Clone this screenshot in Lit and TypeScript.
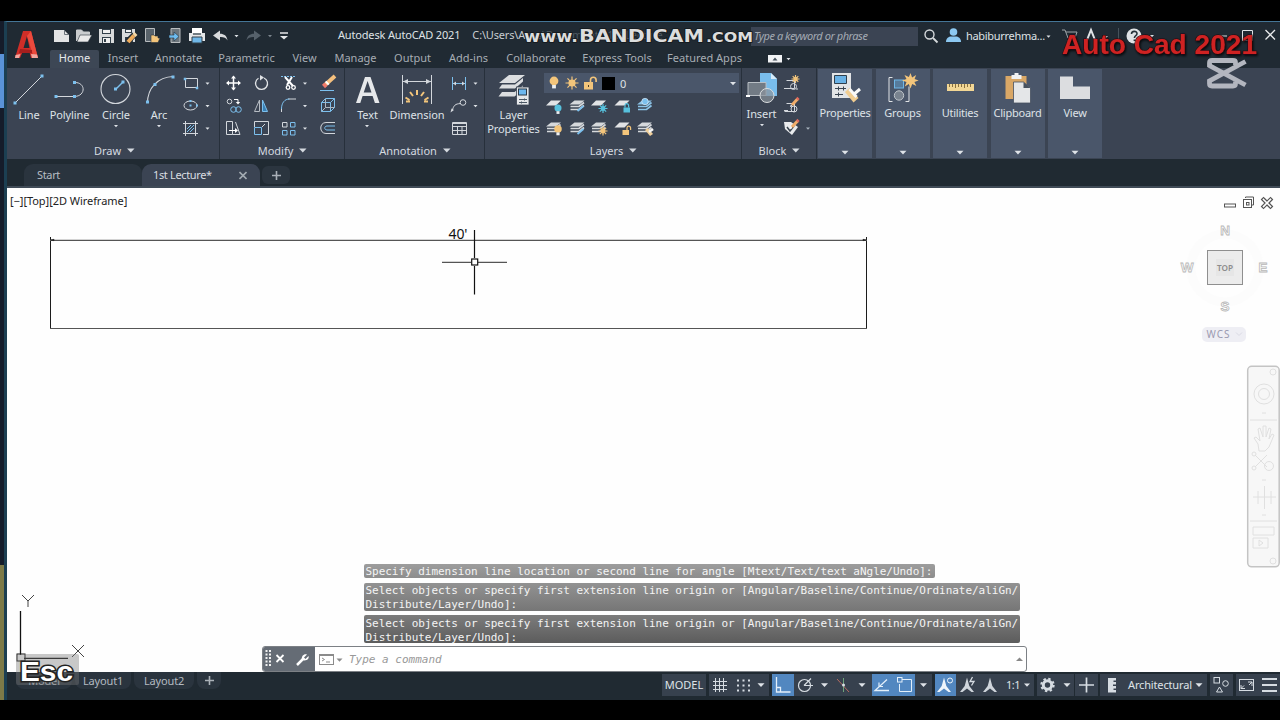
import { LitElement, html, svg, css, TemplateResult } from "lit";
import { customElement } from "lit/decorators.js";

type Body = unknown;

// Every glyph is drawn in window coordinates; the viewBox selects its cell.
const ic = (x: number, y: number, w: number, h: number, body: Body): TemplateResult =>
  html`<svg class="ic" width=${w} height=${h} viewBox="${x} ${y} ${w} ${h}" fill="none">${body}</svg>`;

const caret = (x: number, y: number, s = 2.5, c = "#dfe3e8") =>
  svg`<path d="M${x - s} ${y - s / 2}h${2 * s}l${-s} ${s * 1.1}z" fill=${c}/>`;

const B = "#7cc0ee";
const L = "#d3d7dc";
const Y = "#f3c57b";

const dots = (pts: number[][], s = 3) =>
  pts.map(([x, y]) => svg`<rect x=${x - s / 2} y=${y - s / 2} width=${s} height=${s} fill=${B}/>`);

const quick = [
  ic(50, 22, 22, 28, svg`<path d="M54 30h10l5 5v7H54z" fill="#e3e4e5"/><path d="M64.500 30v4.500H69" stroke="#6b737b"/>`),
  ic(72, 22, 23, 28, svg`<path d="M76.500 41V30h5l2 2h6v3" stroke="#c9ccce" fill="#c9ccce"/><path d="M80 35h12l-4 7H77z" fill="#e9e9e9" stroke="#2a343d" stroke-width=".6"/>`),
  ic(95, 22, 23, 28, svg`<path d="M99 29h15v14H99z" fill="#d9dbdc"/><path d="M102 29h9v5h-9zM102 37h9v6h-9z" fill="#33404a"/><path d="M103 30h7v3h-7zM103 38h7v5h-7z" fill="#f0f0f0"/><path d="M104 39h2v3h-2z" fill="#33404a"/>`),
  ic(118, 22, 22, 28, svg`<path d="M122 29h13v13h-13z" fill="#d9dbdc"/><path d="M125 29h7v4h-7zM125 37h8v5h-8z" fill="#33404a"/><path d="M126 30h5v2h-5z" fill="#f0f0f0"/><path d="M127.500 41.500l7-7" stroke="#202a33" stroke-width="6"/><path d="M128 42l6-6.500" stroke="#f0ad5c" stroke-width="4"/><path d="M134 35.500l2-2" stroke="#f5d9a6" stroke-width="4"/>`),
  ic(140, 22, 23, 28, svg`<path d="M145.500 28.500h9v13h-9z" fill="#59636b" stroke="#b8bcbf"/><path d="M151 42v-7h3l1 1h3v2h2l-2 4.500h-7z" fill=${Y} stroke="#29333c" stroke-width=".6"/>`),
  ic(163, 22, 23, 28, svg`<path d="M171 28.500h9v14h-9z" fill="#6d767d" stroke="#b8bcbf"/><path d="M169 35h5v-3l5 4.500-5 4.500v-3h-5z" fill="#6fbdf0" stroke="#24303a" stroke-width=".6"/>`),
  ic(186, 22, 22, 28, svg`<path d="M192 28h10v5h-10z" fill="#fff"/><path d="M189 33h16v8H189z" fill="#e4e6e8"/><path d="M192 37h10v6h-10z" fill="#6fb7e8" stroke="#33404a"/><path d="M193 34h8" stroke="#4d5962" stroke-width="1.500"/>`),
  ic(208, 22, 34, 28, svg`<path d="M213 35.500l7-5v3.200c4 0 7 2 7.500 6.800-1.500-3-4-3.500-7.500-3.400V40.500z" fill="#d8dadc"/>${caret(236.5, 36, 2)}`),
  ic(242, 22, 34, 28, svg`<path d="M261 35.500l-7-5v3.200c-4 0-7 2-7.500 6.800 1.500-3 4-3.500 7.500-3.400V40.500z" fill="#56616b"/>${caret(270, 36, 2, "#7c868e")}`),
  ic(276, 22, 22, 28, svg`<path d="M280 33h8" stroke="#e4e6e8" stroke-width="1.500"/><path d="M280 36h8l-4 3.500z" fill="#e4e6e8"/>`),
];

const tabs: [string, number][] = [
  ["Home", 49], ["Insert", 48], ["Annotate", 63], ["Parametric", 73], ["View", 43], ["Manage", 59],
  ["Output", 55], ["Add-ins", 57], ["Collaborate", 78], ["Express Tools", 84], ["Featured Apps", 91],
];

const sheets = (x: number, y: number, c = "#d6d9dc") => svg`
  <path d="M${x} ${y}h10l-5 4h-10z" fill=${c}/>
  <path d="M${x - 4} ${y + 6}h8.500l5-4M${x - 4} ${y + 9}h8.500l5-4" stroke=${c} stroke-width="1.700"/>`;

const bulb = (x: number, y: number, c = Y, k = 1) => svg`
  <circle cx=${x} cy=${y} r=${4.4 * k} fill=${c}/><path d="M${x - 1.9 * k} ${y + 4 * k}h${3.8 * k}v${3.4 * k}h${-3.8 * k}z" fill="#eceff1"/>`;

const sun = (x: number, y: number, r: number, c = Y) => svg`
  <circle cx=${x} cy=${y} r=${r * 0.55} fill=${c}/>
  <path d="M${x - r} ${y}h${2 * r}M${x} ${y - r}v${2 * r}M${x - r * 0.7} ${y - r * 0.7}l${r * 1.4} ${r * 1.4}M${x + r * 0.7} ${y - r * 0.7}l${-r * 1.4} ${r * 1.4}" stroke=${c} stroke-width="1.200"/>`;

const lock = (x: number, y: number, c: string, open = false) => svg`
  <rect x=${x - 3} y=${y} width="6.500" height="5" fill=${c}/><path d="M${x - 1.5 + (open ? 3 : 0)} ${y}v-2a1.800 1.800 0 013.600 0v2" stroke=${c} stroke-width="1.200"/>`;

const pencil = (x: number, y: number) => svg`
  <path d="M${x} ${y}l5.500-6" stroke="#f0ad6a" stroke-width="3"/><path d="M${x + 5} ${y - 5.5}l1.500-1.600" stroke="#e06a5e" stroke-width="3"/><path d="M${x - 2} ${y + 2}l2.500-.8-1.600-1.600z" fill="#fff"/>`;

const brush = (x: number, y: number) => svg`
  <path d="M${x - 4} ${y - 2}l3-2 5 6-3 2z" fill="#efcf9b"/><path d="M${x} ${y}l4-3" stroke="#f5f5f5" stroke-width="2.500"/>`;

const big = (icon: TemplateResult, label: string, w: number, arrow?: TemplateResult) => html`
  <div class="big" style="width:${w}px">${icon}<span class="lbl">${label}</span>${arrow ?? ""}</div>`;

const drawSmall = [
  ic(178, 72, 41, 23, svg`<path d="M185.500 78.500h12v9h-12z" stroke=${L}/>${dots([[185, 79], [197, 88]], 2.5)}${caret(207.5, 83.5, 2)}`),
  ic(178, 95, 41, 22, svg`<ellipse cx="190.500" cy="105.500" rx="6.500" ry="4.500" stroke=${L}/>${dots([[190.5, 105.5], [197, 105.5], [190.5, 101]], 2)}${caret(207.5, 106, 2)}`),
  ic(178, 117, 41, 23, svg`<path d="M183 123.500h15M183 133.500h15M185.500 121v15M195.500 121v15" stroke=${L}/><path d="M187 129l4-4M187 132l7-7M190 132l4-4" stroke=${B}/>${caret(207.5, 128.5, 2)}`),
];

const modifyIcons = [
  ic(220, 72, 27, 23, svg`<path d="M227 83h13M233.500 76.500v13" stroke="#fff" stroke-width="1.500"/><path d="M226 83l3-2.500v5zM241 83l-3-2.500v5zM233.500 75.500l-2.500 3h5zM233.500 90.500l-2.500-3h5z" fill="#fff"/>`),
  ic(247, 72, 27, 23, svg`<path d="M258.500 78.300a6 6 0 105.500-.3" stroke="#e0e3e6" stroke-width="1.300"/><path d="M260 75v5.500l4-3z" fill="#e0e3e6"/>`),
  ic(274, 72, 38, 23, svg`<path d="M281 76.500h15" stroke=${B} stroke-dasharray="2 1"/><path d="M285 77l8 9M292 77l-5 8" stroke="#fff" stroke-width="2"/><circle cx="288" cy="87.500" r="1.800" stroke="#fff" stroke-width="1.300"/><circle cx="293.500" cy="87.500" r="1.800" stroke="#fff" stroke-width="1.300"/>${caret(305, 83.5, 2)}`),
  ic(312, 72, 32, 23, svg`<path d="M320 90.500h14" stroke=${B}/><path d="M325 85l10-9" stroke="#f5c07e" stroke-width="4"/><path d="M323.500 86.500l2.500-2.300" stroke="#f0796b" stroke-width="4.500"/><path d="M326.500 83.700l1.500-1.400" stroke="#fff" stroke-width="4.500"/>`),
  ic(220, 95, 27, 22, svg`<circle cx="229.500" cy="101.500" r="2.300" stroke=${L}/><path d="M234 99.500h4v3.500" stroke="#fff"/><path d="M235.800 102h4.400l-2.200 2.500z" fill="#fff"/><circle cx="233.500" cy="109.500" r="2.800" stroke=${B}/><circle cx="238.500" cy="109.500" r="2.800" stroke=${B}/>`),
  ic(247, 95, 27, 22, svg`<path d="M259.500 100v11.500h-5z" stroke="#b6bcc3"/><path d="M262.500 100v11.500h5z" stroke=${B} fill="#3980b4"/>`),
  ic(274, 95, 38, 22, svg`<path d="M281.500 112v-4M288 99h8" stroke=${L}/><path d="M281.500 109c0-6 3-10 8-10" stroke=${B}/>${caret(305, 106, 2)}`),
  ic(312, 95, 32, 22, svg`<path d="M321.500 102.500h9v9h-9zM321.500 102.500l4-4h9v9l-4 4M330.500 102.500l4-4" stroke=${B}/><path d="M325.500 99v8.500h9M325.500 107.500l-4 4" stroke="#aeb8c1"/>`),
  ic(220, 117, 27, 23, svg`<path d="M226.500 121.500h6v13h-6zM235.500 122l4.500 12.500h-7.500" stroke=${L}/><path d="M229 130.500h7" stroke="#fff"/><path d="M235 128v5l3-2.500z" fill="#fff"/>`),
  ic(247, 117, 27, 23, svg`<path d="M254.500 127v-5.500h14v13H263" stroke=${L}/><path d="M254.500 127.500h7v7h-7z" stroke=${B}/><path d="M262 127l3-3" stroke=${L}/>`),
  ic(274, 117, 38, 23, svg`<path d="M282.500 122.500h4.500v4.500h-4.500z" stroke=${L}/><path d="M282.500 130.500h4.500v4.500h-4.500zM290.500 130.500h4.500v4.500h-4.500zM290.500 122.500h4.500v4.500h-4.500z" stroke=${B}/>${caret(305, 128.5, 2)}`),
  ic(312, 117, 32, 23, svg`<path d="M335 122.500h-9c-7 0-7 11 0 11h9" stroke=${L}/><path d="M335 126h-8c-3 0-3 4 0 4h8" stroke=${B}/>`),
];

const annSmall = [
  ic(444, 72, 40, 23, svg`<path d="M452.500 77v13M465.500 77v13M453 83.500h12" stroke=${B}/><path d="M453 83.500l3-2v4zM465 83.500l-3-2v4z" fill=${L}/>${caret(475.5, 83.5, 2)}`),
  ic(444, 95, 40, 22, svg`<path d="M452 111c2-6 3-7 8.500-7.500" stroke=${L}/><circle cx="463" cy="102.500" r="2.800" stroke=${L}/><path d="M450.500 112.500l1-4 2.500 1.500z" fill=${L}/>${caret(475.5, 106, 2)}`),
  ic(444, 117, 40, 23, svg`<path d="M452.500 122.500h14v12h-14zM452.500 126.500h14M452.500 130.500h14M457.500 126v8M462 126v8" stroke=${L}/><path d="M452 123.500h15" stroke=${L}/>`),
];

const layerRow = (y: number, first: boolean) => {
  const top = y - 6;
  const xs = [544, 566.5, 589, 611.5, 634];
  const c = [554, 577, 599, 622, 645];
  const flat = (i: number) => (first ? i === 0 || i === 2 || i === 3 : i === 3);
  const fg = (i: number): Body => {
    const x = c[i];
    if (first) {
      return [
        bulb(x + 4, y + 2, "#57c1dd", 0.8),
        svg`<path d="M${x} ${y + 5}l6-5" stroke=${B} stroke-width="1.800"/>`,
        sun(x + 4, y + 2.5, 4.5, "#57c1dd"),
        lock(x + 4, y + 1.5, "#57c1dd"),
        svg`<circle cx=${x} cy=${y - 4.5} r="3.200" fill=${B} stroke="#e8f2fa" stroke-width=".6"/>`,
      ][i];
    }
    return [
      bulb(x + 4, y + 1, Y, 0.85),
      svg`<path d="M${x} ${y + 6}l6-5" stroke=${B} stroke-width="1.800"/>`,
      sun(x + 4, y + 3, 4.5, Y),
      lock(x + 3, y + 2, Y, true),
      brush(x + 4, y + 4),
    ][i];
  };
  return c.map((x, i) =>
    ic(xs[i], y - 11, 22.5, 22, svg`${
      flat(i)
        ? svg`<path d="M${x - 3} ${top + 0.5}h10l-5 5h-10z" fill="#e1e3e5"/>`
        : sheets(x - 3, top + 0.5, first && i === 4 ? "#8cc4e8" : "#d6d9dc")}${fg(i)}`));
};

const blockSmall = [
  ic(781, 72, 35, 23, svg`<path d="M786.500 80.500h8v8h-10M796 89h2" stroke=${L}/><circle cx="793.500" cy="86.500" r="3" stroke=${L}/><path d="M784 88.500h4" stroke=${L}/>${sun(795.5, 79, 4)}`),
  ic(781, 95, 35, 22, svg`<path d="M786.500 103.500h8v8h-10M784 110.500h4" stroke=${L}/><circle cx="794" cy="109" r="3" stroke=${L}/>${pencil(792, 105)}`),
  ic(781, 117, 35, 23, svg`<path d="M784 122h7l7 5-6 8-7-6z" fill="#e9ebed"/><path d="M787 127l3 4 4-5" stroke="#39434f" stroke-width="1.500"/>${pencil(792, 127)}${caret(808, 128.5, 2, "#a9b4bf")}`),
];

const tiles: [string, number, TemplateResult][] = [
  ["Properties", 818, ic(818, 69, 54, 37, svg`<path d="M832 73h19v25h-19z" fill="#e2e4e6"/><path d="M834.500 75.500h12v8h-12z" fill="#69b1e5" stroke="#2f3f4d"/><path d="M835 88.500h11M835 94.500h8M838.500 86.500v4M843.500 86.500v4M838.500 92.500v4" stroke="#3a4552"/><path d="M845 92l4.500-4 9 10-5 4.500z" fill="#f0cc90"/><path d="M853 95l7-6M849.500 89l7 8" stroke="#f8f8f8" stroke-width="3"/>`)],
  ["Groups", 875.5, ic(875.5, 69, 54, 37, svg`<path d="M892 77.500h-3.500v24h3.500M905 101.500h3.500v-15" stroke="#e0e3e6"/><rect x="894" y="80" width="9" height="8" fill="#567b9c" stroke="#6fb7e8"/><circle cx="898.500" cy="95.500" r="4.700" fill="#79838f" stroke="#bfc5cb"/><path d="M910 73l1.600 4.500 4-2.500-1.500 4 4 1.500-4.200 1.500 2 4-4.200-2-1.700 4.500-1.700-4.500-4 2.500 1.700-4.500-4.500-1.500 4.500-1.500-2-4 4.400 2z" fill=${Y}/>`)],
  ["Utilities", 933, ic(933, 69, 54, 37, svg`<path d="M947 84h27v7h-27z" fill="#f3d795"/><path d="M949.500 84v3M952.500 84v3M955.500 84v4M958.500 84v3M961.500 84v3M964.500 84v4M967.500 84v3M970.500 84v3" stroke="#89703f"/>`)],
  ["Clipboard", 990.5, ic(990.5, 69, 54, 37, svg`<path d="M1005 76h21v23h-21z" fill="#d9a766"/><path d="M1011 75h3v-2h4v2h3v4h-10z" fill="#f2f2f2"/><path d="M1013 82h10l7 6v15h-17z" fill="#e4e6e8" stroke="#46515f" stroke-width=".8"/><path d="M1023 82v6h7z" fill="#46515f"/>`)],
  ["View", 1048, ic(1048, 69, 54, 37, svg`<path d="M1060 76.500h13v10h17V99h-30z" fill="#dcdde0"/>`)],
];

@customElement("cad-titlebar")
class CadTitlebar extends LitElement {
  static styles = css`
    :host { display: grid; grid-template-columns: 43px 1fr; grid-template-rows: 28px 18px; background: #202a33; color: #dfe2e5; }
    .ic { display: block; flex: none; }
    .logo { grid-row: 1 / 3; }
    .row { display: flex; align-items: center; min-width: 0; }
    .title { width: 453px; flex: none; padding: 0 0 4px 40px; box-sizing: border-box; display: flex; gap: 12px; white-space: pre; overflow: hidden; height: 28px; align-items: center; letter-spacing: -0.17px; }
    .file { color: #c9cdd1; }
    .dim { color: #4f5a62; }
    .search { width: 167px; height: 19px; flex: none; background: #3b4453; display: flex; align-items: center; padding: 0 0 2px 3px; box-sizing: border-box; font-style: italic; color: #a4abb3; margin-right: 1px; letter-spacing: -0.45px; white-space: nowrap; }
    .user { width: 78px; flex: none; white-space: nowrap; letter-spacing: -0.3px; padding-bottom: 1px; }
    .tab { height: 18px; display: flex; align-items: center; justify-content: center; color: #a7adb3; flex: none; white-space: nowrap; padding-bottom: 3px; box-sizing: border-box; }
    .tab.on { background: #3d4755; color: #e6e9ec; border-radius: 2px 2px 0 0; }
  `;
  render() {
    return html`
      <div class="logo">${ic(7, 22, 43, 46, svg`
        <path d="M23 31h8l7 27h-7l-1.500-6h-7L20 58h-5z" fill="#cf2e28"/>
        <path d="M27 36l-3.500 12h6z" fill="#202a33"/><path d="M31 31l7 27h-4l-7-22z" fill="#ec4a3d"/>
        <path d="M15.500 55l5-1-1.500 4h-4zM31 54l6 .5 1 3.500h-6z" fill="#f2a79f"/><path d="M20 49l12 1v3H19z" fill="#a51e1d"/>`)}</div>
      <div class="row">${quick}
        <div class="title"><span>Autodesk AutoCAD 2021</span><span class="file">C:\\Users\\A<span class="dim">sus\\Documents\\1st Lecture</span></span></div>
        <div class="search">Type a keyword or phrase</div>
        ${ic(919, 22, 23, 28, svg`<circle cx="929.500" cy="34.500" r="4.500" stroke="#d5d9dc" stroke-width="1.400"/><path d="M933 38l4.500 4.500" stroke="#d5d9dc" stroke-width="1.800"/>`)}
        ${ic(942, 22, 24, 28, svg`<circle cx="953.500" cy="32" r="3.800" fill="#8cc8f1"/><path d="M946 42c0-4 3-5.500 5-5.500h5c2 0 5 1.500 5 5.500z" fill="#8cc8f1"/>`)}
        <span class="user">habiburrehma...</span>
        ${ic(1044, 22, 12, 28, caret(1048.5, 36.5, 2))}
        ${ic(1056, 22, 24, 28, svg`<path d="M1062 30h3l3 8h7l2-6h-11" stroke="#9da3a8"/><path d="M1067 41h2M1073 41h2" stroke="#9da3a8" stroke-width="2"/>`)}
        ${ic(1080, 22, 36, 28, svg`<path d="M1087 40l4-10 4 10" stroke="#e0e3e6" stroke-width="2"/>${caret(1106, 37, 2)}`)}
        ${ic(1116, 22, 45, 28, svg`<path d="M1118.500 28v15" stroke="#46525c"/><circle cx="1134" cy="36" r="7.500" fill="#dfe3e6"/><path d="M1131.500 34c0-3.500 5.500-3.500 5.500-.3 0 2-2.600 2-2.600 4.300M1134.400 39.500v1.600" stroke="#26313a" stroke-width="1.600"/>${caret(1152, 36, 2)}`)}
        ${ic(1161, 22, 99, 28, svg`<path d="M1218 36h9" stroke="#dfe2e5"/><path d="M1242.500 30.500h10v10h-10z" stroke="#dfe2e5"/>`)}
        ${ic(1260, 22, 20, 28, svg`<path d="M1265.500 30l9.500 9.500M1275 30l-9.500 9.500" stroke="#e8eaec" stroke-width="1.300"/>`)}
      </div>
      <div class="row">
        ${tabs.map(([t, w], i) => html`<div class="tab ${i === 0 ? "on" : ""}" style="width:${w}px">${t}</div>`)}
        ${ic(750, 50, 50, 18, svg`<path d="M768 55h14v7.500h-14z" fill="#f1f3f5"/><path d="M772.500 60.500h5l-2.500-3z" fill="#47525c"/>${caret(788.5, 59, 2)}`)}
      </div>`;
  }
}

@customElement("cad-ribbon")
class CadRibbon extends LitElement {
  static styles = css`
    :host { display: flex; background: #3b4453; color: #dee2e7; padding-left: 2px; height: 91px; box-sizing: border-box; }
    .ic { display: block; flex: none; }
    .panel { display: flex; flex-direction: column; box-sizing: border-box; border-right: 1px solid #27303b; flex: none; }
    .body { display: flex; height: 74px; padding-top: 2px; box-sizing: border-box; }
    .foot { height: 17px; display: flex; align-items: center; justify-content: center; gap: 6px; color: #d5dae0; padding: 0 0 0 1px; box-sizing: border-box; line-height: 15px; }
    .big { display: flex; flex-direction: column; align-items: center; flex: none; }
    .lbl { line-height: 14px; text-align: center; white-space: pre; letter-spacing: -0.1px; }
    .col { display: flex; flex-direction: column; padding-top: 2px; }
    .layers { padding: 2px 0 0 2px; }
    .grid { display: grid; grid-template-columns: 27px 27px 38px 31px; grid-template-rows: 23px 22px 23px; padding-top: 2px; }
    .combo { height: 20px; width: 195px; background: #4a566a; display: flex; align-items: center; margin: 1px 0 2px; }
    .swatch { width: 13px; height: 13px; background: #000; margin: 0 5px 0 1px; }
    .grow { flex: 1; }
    .lrow { display: flex; }
    .tile { width: 54px; margin-right: 3.5px; height: 89px; margin-top: 1px; background: #4a566a; display: flex; flex-direction: column; align-items: center; flex: none; }
    .tile .lbl { letter-spacing: -0.25px; }
    .tiles { display: flex; padding-left: 1px; }
  `;
  foot(t: string) {
    return html`<div class="foot"><span>${t}</span>${ic(0, 0, 8, 5, svg`<path d="M0 .5h7.500L3.750 4.500z" fill="#d5dae0"/>`)}</div>`;
  }
  render() {
    return html`
      <div class="panel" style="width:211px">
        <div class="body">
          ${big(ic(9, 70, 40, 38, svg`<path d="M15 103l27-27" stroke=${L}/>${dots([[15, 103], [42, 76]])}`), "Line", 40)}
          ${big(ic(49, 70, 41, 38, svg`<path d="M55 96.500h19c12 0 12-14 1-14" stroke=${L}/>${dots([[56, 96.5], [74.5, 96.5], [74.5, 82.5]])}`), "Polyline", 41)}
          ${big(ic(90, 70, 52, 38, svg`<circle cx="115.500" cy="89" r="14.500" stroke=${L} stroke-width="1.100"/><path d="M116 89l7-7" stroke=${B} stroke-width="1.500"/>${dots([[115.5, 89], [123, 82]])}`), "Circle", 52, ic(90, 122, 52, 8, caret(116, 126, 2)))}
          ${big(ic(142, 70, 34, 38, svg`<path d="M147.500 103c0-15 10-26 26-26.500" stroke=${L} stroke-width="1.100"/>${dots([[147.5, 102], [155, 84.5], [173, 77]])}`), "Arc", 34, ic(142, 122, 34, 8, caret(159, 126, 2)))}
          <div class="col" style="padding-left:2px">${drawSmall}</div>
        </div>${this.foot("Draw")}
      </div>
      <div class="panel" style="width:125px">
        <div class="body"><div class="grid">${modifyIcons}</div></div>${this.foot("Modify")}
      </div>
      <div class="panel" style="width:140px">
        <div class="body">
          ${big(ic(345, 70, 45, 38, svg`<path d="M365 77h5.500l9 26h-4.600l-2.300-7h-10l-2.300 7H356zM367.600 81l-3.900 11.500h7.800z" fill="#e6e8ea" fill-rule="evenodd"/>`), "Text", 45, ic(345, 122, 45, 8, caret(367, 126, 2)))}
          ${big(ic(390, 70, 54, 38, svg`<path d="M402.500 75v29M431.500 75v29M403 81.500h28" stroke=${L}/><path d="M403 81.500l5-2.500v5zM431 81.500l-5-2.500v5z" fill=${L}/><path d="M417 90v5M410 92l3 4M424 92l-3 4M405.500 97.500l4 2.500M428.500 97.500l-4 2.500M406 101.500h4M424 101.500h4" stroke=${Y} stroke-width="2"/>`), "Dimension", 54)}
          <div class="col">${annSmall}</div>
        </div>${this.foot("Annotation")}
      </div>
      <div class="panel" style="width:257px">
        <div class="body">
          ${big(ic(485, 70, 57, 38, svg`
            <path d="M509 75h16l-10 8h-16z" fill="#dcdee0"/><path d="M502 84.500h13l8-6.500v3.500l-8 7h-16zM502 92h12.500l8.500-6.500v4l-8.500 7h-16z" fill="#dcdee0"/>
            <rect x="516.500" y="87" width="12.500" height="18" fill="#e6e8ea" stroke="#3b4453" stroke-width=".8"/><rect x="518.500" y="89" width="8" height="6" fill="#6db8ef" stroke="#2b3946"/><path d="M519 99.500h8M519 102.500h8M524.500 98.500v2M521.500 101.500v2" stroke="#4b5865"/>`), "Layer\nProperties", 57)}
          <div class="col layers">
            <div class="combo">
              ${ic(544, 73, 20, 20, bulb(554, 81))}
              ${ic(564, 73, 18, 20, sun(572, 83, 6.5))}
              ${ic(582, 73, 19, 20, svg`<rect x="584" y="82" width="9" height="7.500" fill=${Y}/><path d="M590.500 82v-2a2.800 2.800 0 015.600 0v2" stroke=${Y} stroke-width="1.600"/><path d="M588.500 85v2" stroke="#4a3d26"/>`)}
              <span class="swatch"></span><span>0</span><span class="grow"></span>
              ${ic(726, 73, 13, 20, caret(733, 83.5, 3))}
            </div>
            <div class="lrow">${layerRow(106, true)}</div>
            <div class="lrow">${layerRow(128.5, false)}</div>
          </div>
        </div>${this.foot("Layers")}
      </div>
      <div class="panel" style="width:75px">
        <div class="body">
          ${big(ic(742, 70, 39, 37, svg`<path d="M760 73h11l6 6v17h-17z" fill="#79bdec"/><path d="M771 73v6h6z" fill="#d5ebfa"/><path d="M748 82.500h18v13h-18z" fill="#727b85" stroke="#b9bfc5"/><circle cx="767" cy="95.500" r="7" fill="#8a939b" fill-opacity=".7" stroke="#dadddf"/><path d="M746 96h4" stroke="#fff" stroke-width="2"/>`), "Insert", 39, ic(742, 121, 39, 8, caret(762, 125, 2)))}
          <div class="col">${blockSmall}</div>
        </div>${this.foot("Block")}
      </div>
      <div class="tiles">${tiles.map(([t, x, i]) => html`<div class="tile">${i}<span class="lbl">${t}</span><span class="grow"></span>${ic(x, 145, 54, 13, caret(x + 27, 152.5, 3.5))}</div>`)}</div>`;
  }
}

@customElement("cad-filetabs")
class CadFiletabs extends LitElement {
  static styles = css`
    :host { display: flex; background: #202a32; height: 29px; box-sizing: border-box; padding: 5px 0 0 17px; border-bottom: 2px solid #404b57; color: #d9dde1; }
    .ic { display: block; flex: none; }
    .t { height: 22px; box-sizing: border-box; display: flex; align-items: center; justify-content: space-between; letter-spacing: -0.35px; }
    .t span { padding-bottom: 2px; }
    .start { width: 118px; background: #2a343e; border-radius: 9px 9px 0 0; padding-left: 13px; color: #b6bcc2; }
    .doc { width: 118px; background: #3b4453; border-radius: 9px 9px 0 0; padding: 0 13px 0 11px; }
    .plus { width: 28px; height: 18px; margin: 2px 0 0 2px; background: #2b353f; border-radius: 6px; display: flex; justify-content: center; align-items: center; }
  `;
  render() {
    return html`
      <div class="t start"><span>Start</span></div>
      <div class="t doc"><span>1st Lecture*</span>${ic(0, 0, 8, 9, svg`<path d="M.5 1l7 7M7.500 1L.5 8" stroke="#a3abb2" stroke-width="1.600"/>`)}</div>
      <div class="plus">${ic(0, 0, 9, 9, svg`<path d="M0 4.500h9M4.500 0v9" stroke="#a9b0b7" stroke-width="1.600"/>`)}</div>`;
  }
}

@customElement("cad-canvas")
class CadCanvas extends LitElement {
  static styles = css`
    :host { display: block; position: relative; background: #fefefe; overflow: hidden; }
    .ic { display: block; }
    .scene { position: absolute; inset: 0; }
    .ui { font-family: "Noto Sans", sans-serif; }
    .view { position: absolute; left: 3px; top: 5px; color: #222; line-height: 16px; letter-spacing: -0.05px; }
    .log { position: absolute; left: 357px; bottom: 29px; width: 656px; display: flex; flex-direction: column; align-items: flex-start; font: 11px/14px "DejaVu Sans Mono", monospace; color: #f4f4f4; letter-spacing: -0.03px; }
    .m { border-radius: 2px; padding: 1px 0 0 1.5px; white-space: pre; box-sizing: border-box; }
    .a { background: linear-gradient(#9d9d9d, #8d8d8d); margin-bottom: 5px; width: 571px; height: 14px; }
    .b { background: linear-gradient(#929292, #767676); margin-bottom: 4px; width: 656px; height: 28px; }
    .c { background: linear-gradient(#7c7c7c, #5c5c5c); width: 656px; height: 28px; padding-top: 2px; }
    .cmd { position: absolute; left: 255px; bottom: 0; width: 765px; height: 26px; box-sizing: border-box; border: 1px solid #7c8085; border-radius: 3px; background: #fff; display: flex; align-items: center; font: italic 11px "DejaVu Sans Mono", monospace; color: #999; overflow: hidden; }
    .grow { flex: 1; }
  `;
  render() {
    return html`
      <div class="scene">${ic(7, 188, 1273, 484, svg`
        <path d="M50.500 237v92M866.500 237v92" stroke="#1c1c1c"/>
        <path d="M50 328.500h817" stroke="#555"/><path d="M50 240.300h817" stroke="#555" stroke-width="1.300"/>
        <path d="M51 240l3-.7v1.400zM866 240l-3-.7v1.400z" fill="#222" stroke="#222" stroke-width=".7"/>
        <path d="M474.500 230v28M474.500 266v28.500" stroke="#111" stroke-width="1.200"/><path d="M442 262.300h29M478 262.300h29" stroke="#555" stroke-width="1.200"/>
        <rect x="471.700" y="259" width="6" height="6" stroke="#111" stroke-width="1.200"/>
        <text class="ui" x="448.500" y="239" font-size="14" fill="#111" textLength="19">40'</text>

        <path d="M20.500 611v44M24 658.300h44" stroke="#111" stroke-width="1.300"/><rect x="17" y="654" width="8" height="7" stroke="#111"/>
        <path d="M22 595l6 6 6-6M28 601v6M72 645l12 12M84 645l-12 12" stroke="#444"/>

        <circle cx="1225" cy="268" r="34" stroke="#fcfcfc" stroke-width="9"/>
        <rect x="1207.500" y="250.500" width="35" height="34" fill="#ececec" stroke="#8f8f8f"/>
        <rect x="1216" y="259" width="18" height="17" fill="#e6e6e6"/>
        <text class="ui" x="1217" y="271" font-size="9" font-weight="600" fill="#8c8c8c" textLength="16" lengthAdjust="spacingAndGlyphs">TOP</text>
        <g font-family="Liberation Sans" font-size="13.500" font-weight="700" fill="#fbfbfb" stroke="#b8b8b8" stroke-width=".8" text-anchor="middle">
          <text x="1225" y="234.500">N</text><text x="1225" y="310.500">S</text><text x="1187" y="272">W</text><text x="1263" y="272">E</text></g>
        <rect x="1202" y="327" width="44" height="15" rx="5" fill="#eeeef4"/>
        <text class="ui" x="1206.500" y="337.500" font-size="10" fill="#9a9ab0" textLength="23">WCS</text>
        <path d="M1236 332.500l3 3 3-3" stroke="#dadae4"/>

        <rect x="1224.500" y="204" width="11" height="3" stroke="#555"/>
        <path d="M1245.500 198v-1h8v8h-2" stroke="#555"/><rect x="1243.500" y="199.500" width="8" height="8" stroke="#555"/><rect x="1246.500" y="202.500" width="2.500" height="2.500" stroke="#555"/>
        <path d="M1263.500 199.500l7 7M1270.500 199.500l-7 7" stroke="#555" stroke-width="4" stroke-linecap="square"/><path d="M1263.500 199.500l7 7M1270.500 199.500l-7 7" stroke="#fff" stroke-width="1.600" stroke-linecap="square"/>

        <rect x="1247.700" y="366.300" width="31.500" height="200.500" rx="4" fill="#f7f7f7" stroke="#c4c4c4" stroke-width="1.500"/>
        <g stroke="#e0e0e0"><path d="M1250 420h27M1250 521h27"/><circle cx="1264" cy="394" r="10"/><circle cx="1264" cy="394" r="5.500"/><circle cx="1273" cy="372" r="3"/><circle cx="1273" cy="561" r="3"/>
        <path d="M1258 444l-4-6 2-1 4 4-2-12 2-1 3 9v-11h3v11l3-9 2 1-2 10 3-5 2 1-5 12-4 4h-6z"/>
        <path d="M1255 455l12 12M1267 455l-12 12"/><circle cx="1254" cy="454" r="2"/><circle cx="1254" cy="468" r="2"/><circle cx="1269" cy="466" r="4.500"/>
        <path d="M1253 497h23M1264.500 486v23M1258 491v13M1271 491v13M1262 413h4M1262 480h4M1262 515h4"/>
        <path d="M1253 527h21v8h-21zM1253 538h15v10h-15zM1259 540l4 3-4 3z"/></g>`)}</div>
      <div class="view">[−][Top][2D Wireframe]</div>
      <div class="log">
        <div class="m a">Specify dimension line location or second line for angle [Mtext/Text/text aNgle/Undo]:</div>
        <div class="m b">Select objects or specify first extension line origin or [Angular/Baseline/Continue/Ordinate/aliGn/
Distribute/Layer/Undo]:</div>
        <div class="m c">Select objects or specify first extension line origin or [Angular/Baseline/Continue/Ordinate/aliGn/
Distribute/Layer/Undo]:</div>
      </div>
      <div class="cmd">
        ${ic(263, 646, 52, 26, svg`<path d="M262 646h53v26h-53z" fill="#656c75"/>
          <path d="M266.500 650v17M270 650v17" stroke="#f1f1f1" stroke-width="2" stroke-dasharray="2 1.500"/>
          <path d="M276.500 655l7 7M283.500 655l-7 7" stroke="#fff" stroke-width="1.800"/>
          <path d="M297 665l6-6" stroke="#fff" stroke-width="2.500"/><path d="M302 660c-1-4 2-6.500 5-5.500l-3 3 1.500 1.500 3-3c1 3-2 5.500-6.500 4z" fill="#fff"/>`)}
        ${ic(315, 646, 34, 26, svg`<rect x="319.500" y="654.500" width="14" height="10" stroke="#8b8b8b"/><path d="M320 655.500h13" stroke="#8b8b8b"/><path d="M322 658l2.500 1.500-2.500 1.500M326 662h4" stroke="#8b8b8b"/>${caret(339.5, 660, 3, "#8b8b8b")}`)}
        <span>Type a command</span><span class="grow"></span>
        ${ic(1012, 646, 14, 26, svg`<path d="M1016 661h7l-3.500-3.500z" fill="#888"/>`)}
      </div>`;
  }
}

@customElement("cad-status")
class CadStatus extends LitElement {
  static styles = css`
    :host { display: flex; height: 28px; background: #202a32; color: #dfe3e7; box-sizing: border-box; }
    .ic { display: block; flex: none; }
    .left { display: flex; width: 655px; padding-left: 9px; box-sizing: border-box; align-items: flex-start; color: #b3bac1; letter-spacing: -0.15px; }
    .lt { height: 17px; background: #2a343e; border-radius: 0 0 8px 8px; display: flex; align-items: center; justify-content: center; margin-right: 3px; padding-bottom: 1px; box-sizing: border-box; }
    .g { height: 22px; margin: 2px 0 0; background: #37414e; display: flex; align-items: center; box-sizing: border-box; flex: none; white-space: nowrap; }
    .g span { padding-bottom: 1px; }
    .on { background: #5287c0; }
    .grp { margin-right: 3px; }
  `;
  cell(x: number, w: number, body: Body, on = false, end = false) {
    return html`<div class="g ${on ? "on" : ""} ${end ? "grp" : ""}" style="width:${w}px">${ic(x, 674, w, 22, body)}</div>`;
  }
  render() {
    const W = "#d6dce2";
    const man = (x: number, c = "#cfd5db") => svg`<path d="M${x} 677.500l2.300 8.500 4.700 6h-2.500l-4.500-3.500-4.500 3.500h-2.500l4.700-6z" fill=${c}/>`;
    return html`
      <div class="left">
        <div class="lt" style="width:56px">Model</div>
        <div class="lt" style="width:56px">Layout1</div>
        <div class="lt" style="width:60px">Layout2</div>
        <div class="lt" style="width:24px">${ic(0, 0, 9, 9, svg`<path d="M0 4.500h9M4.500 0v9" stroke="#aab1b8" stroke-width="1.600"/>`)}</div>
      </div>
      <div class="g grp" style="width:44px;justify-content:center"><span>MODEL</span></div>
      ${this.cell(709, 22, svg`<path d="M713 681.500h14M713 685.500h14M713 689.500h14M715.500 678v14M719.500 678v14M723.500 678v14" stroke=${W}/>`)}
      ${this.cell(731, 38, svg`<path d="M737 680.500h13M737 685.500h13M737 690.500h13" stroke=${W} stroke-width="2" stroke-dasharray="2 3.500"/>${caret(761, 685, 3.5)}`, false, true)}
      ${this.cell(772, 22, svg`<path d="M776.500 677v15h14M776.500 687.500h4v4" stroke="#e3effa" stroke-width="1.300"/>`, true)}
      ${this.cell(794, 40, svg`<circle cx="804.500" cy="685.500" r="6" stroke=${W} stroke-width="1.200"/><path d="M804 685.500h9M804 685.500l7-7" stroke=${W} stroke-width="1.200"/>${caret(824.5, 685, 3.5)}`)}
      ${this.cell(834, 38, svg`<path d="M837 679l12 13" stroke="#b56a60"/><path d="M843.500 678v14" stroke="#6ea37a"/><circle cx="843.500" cy="685" r="1.500" fill=${W}/>${caret(862, 685, 3.5)}`)}
      ${this.cell(872, 21, svg`<path d="M889 690.500h-14l12-11" stroke="#e3effa" stroke-width="1.300"/><path d="M879 686.500v-4M879 686.500h4" stroke="#e3effa" stroke-width="1.200"/>`, true)}
      ${this.cell(893, 22, svg`<path d="M902 679.500h9.500v12h-12V684" stroke="#e3effa"/><rect x="897.500" y="677.500" width="4.500" height="4.500" stroke="#e3effa"/>`, true)}
      ${this.cell(915, 17, caret(923.5, 685, 3.5), false, true)}
      ${this.cell(935, 21, svg`${man(944, "#eef5fb")}<circle cx="950" cy="680.500" r="2.500" stroke="#eef5fb"/>`, true)}
      ${this.cell(956, 22, svg`${man(967)}<path d="M972.500 677l-2.500 4.500h4l-2.500 4" stroke=${W} stroke-width="1.300"/>`)}
      ${this.cell(978, 28, man(990))}
      <div class="g grp" style="width:28px;letter-spacing:-0.5px"><span>1:1</span>${ic(1020, 674, 14, 22, caret(1027, 685, 3))}</div>
      ${this.cell(1037, 37, svg`<circle cx="1047.500" cy="685" r="4.200" stroke=${W} stroke-width="3"/><circle cx="1047.500" cy="685" r="6.200" stroke=${W} stroke-width="2" stroke-dasharray="2.400 2.470"/>${caret(1067, 685, 3.5)}`)}
      <div style="width:1px"></div>
      ${this.cell(1075, 23, svg`<path d="M1079 685h15M1086.500 677.500v15" stroke=${W} stroke-width="1.700"/>`)}
      <div style="width:2px"></div>
      ${this.cell(1100, 28, svg`<path d="M1108 678h8v2.500h-2.500v1.500h2.500v2.500h-3v1.500h3v2.500h-2.500v1.500h2.500v2.500h-8z" fill=${W}/>`)}
      <div class="g grp" style="width:79px;letter-spacing:-0.15px"><span>Architectural</span>${ic(1193, 674, 13, 22, caret(1200, 685, 3.5))}</div>
      ${this.cell(1210, 23, svg`<rect x="1214" y="677.500" width="5.500" height="5.500" stroke=${W}/><circle cx="1225.500" cy="683.500" r="2.800" stroke=${W}/><path d="M1219.500 687l3 5h-6z" stroke=${W}/>`, false, true)}
      ${this.cell(1236, 22, svg`<rect x="1239.500" y="679.500" width="14" height="11" stroke=${W}/><path d="M1248 682h4v4M1245 688.500h-4v-3.500M1252 682l-3 3M1241 688.500l3-3" stroke=${W}/>`)}
      ${this.cell(1258, 22, svg`<path d="M1262 679h15M1262 685h15M1262 691h15" stroke=${W} stroke-width="2"/>`)}`;
  }
}

@customElement("app-root")
export class AppRoot extends LitElement {
  static styles = css`
    :host { display: block; position: relative; width: 1280px; height: 720px; overflow: hidden; background: #000; font: 11px "Noto Sans", sans-serif; }
    .ic { display: block; }
    .screen { display: grid; grid-template-columns: 4px 1fr; padding-top: 21px; height: 679px; }
    .desk { display: flex; flex-direction: column; background: #151c2a; }
    .d1 { height: 33px; } .d2 { height: 54px; background: #5a93d8; } .d3 { height: 457px; } .d4 { flex: 1; background: #7d7a48; }
    .win { border-top: 1px solid #447596; border-left: 3px solid #1c3f52; display: flex; flex-direction: column; min-width: 0; background: #202a32; }
    cad-canvas { flex: 1; }
    .over { position: absolute; inset: 0; }
  `;
  render() {
    return html`
      <div class="screen">
        <div class="desk"><div class="d1"></div><div class="d2"></div><div class="d3"></div><div class="d4"></div></div>
        <div class="win">
          <cad-titlebar></cad-titlebar>
          <cad-ribbon></cad-ribbon>
          <cad-filetabs></cad-filetabs>
          <cad-canvas></cad-canvas>
          <cad-status></cad-status>
        </div>
      </div>
      <div class="over">${ic(0, 0, 1280, 720, svg`
        <defs><filter id="sh" x="-5%" y="-30%" width="110%" height="170%"><feDropShadow dx="1" dy="1.500" stdDeviation="1.300" flood-color="#000" flood-opacity=".8"/></filter></defs>
        <g font-family="DejaVu Sans" font-weight="700" fill="#dcdddd" stroke="#15191c" stroke-width="1.600" paint-order="stroke">
          <text x="524" y="42" font-size="15.500" textLength="54" lengthAdjust="spacingAndGlyphs">www.</text>
          <text x="579" y="42" font-size="18" textLength="125" lengthAdjust="spacingAndGlyphs">BANDICAM</text>
          <text x="706" y="42" font-size="14" textLength="47" lengthAdjust="spacingAndGlyphs">.COM</text>
        </g>
        <g stroke="#b3b6bf" stroke-width="4.800"><path d="M1235.500 65v-2.500q0-2-2.500-2h-21q-2.500 0-2.500 2.500v2.500l36 19.500"/><path d="M1235.500 81.500v2q0 2.500-2.500 2.500h-21q-2.500 0-2.500-2.500v-2.500l36-19.500"/></g>
        <text x="1062" y="53.500" font-family="Liberation Sans" font-size="27" font-weight="700" fill="#cf2322" stroke="#2a0e10" stroke-width="1" paint-order="stroke" textLength="195" lengthAdjust="spacingAndGlyphs" filter="url(#sh)">Auto Cad 2021</text>
        <rect x="16" y="654" width="63" height="31" rx="2" fill="#777" fill-opacity=".4"/>
        <text x="20" y="681" font-family="Liberation Sans" font-size="27" font-weight="700" fill="#fff" stroke="#222" stroke-width="3" paint-order="stroke" textLength="53" lengthAdjust="spacingAndGlyphs">Esc</text>`)}</div>`;
  }
}
